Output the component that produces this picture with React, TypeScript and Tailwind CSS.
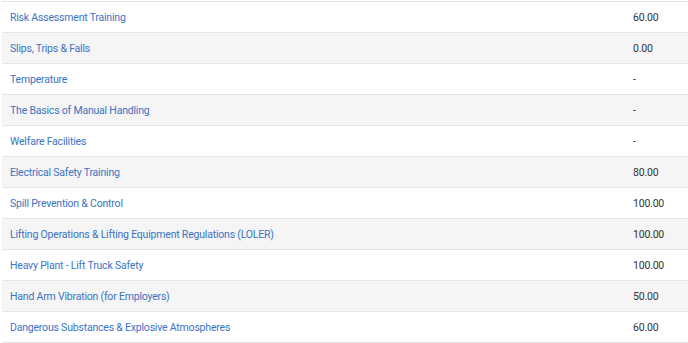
const rows: [string, string][] = [
  ["Risk Assessment Training", "60.00"],
  ["Slips, Trips & Falls", "0.00"],
  ["Temperature", "-"],
  ["The Basics of Manual Handling", "-"],
  ["Welfare Facilities", "-"],
  ["Electrical Safety Training", "80.00"],
  ["Spill Prevention & Control", "100.00"],
  ["Lifting Operations & Lifting Equipment Regulations (LOLER)", "100.00"],
  ["Heavy Plant - Lift Truck Safety", "100.00"],
  ["Hand Arm Vibration (for Employers)", "50.00"],
  ["Dangerous Substances & Explosive Atmospheres", "60.00"],
]

export default function App() {
  return (
    <div className="w-[688px] h-[343px] overflow-hidden bg-white pl-[2px] pt-px font-['Roboto',sans-serif] text-[10.5px] tracking-[-0.2px]">
      <div className="border-t border-[#e5e5e5]">
        {rows.map(([name, score], i) => (
          <div
            key={name}
            className={`flex h-[31px] items-center pt-[2px] border-b border-[#e5e5e5] ${i % 2 === 1 ? "bg-[#f5f5f5]" : "bg-white"}`}
          >
            <a className="flex-1 pl-2 text-[#3b73c4]">{name}</a>
            <span className="w-[55px] text-[#333]">{score}</span>
          </div>
        ))}
      </div>
    </div>
  )
}
